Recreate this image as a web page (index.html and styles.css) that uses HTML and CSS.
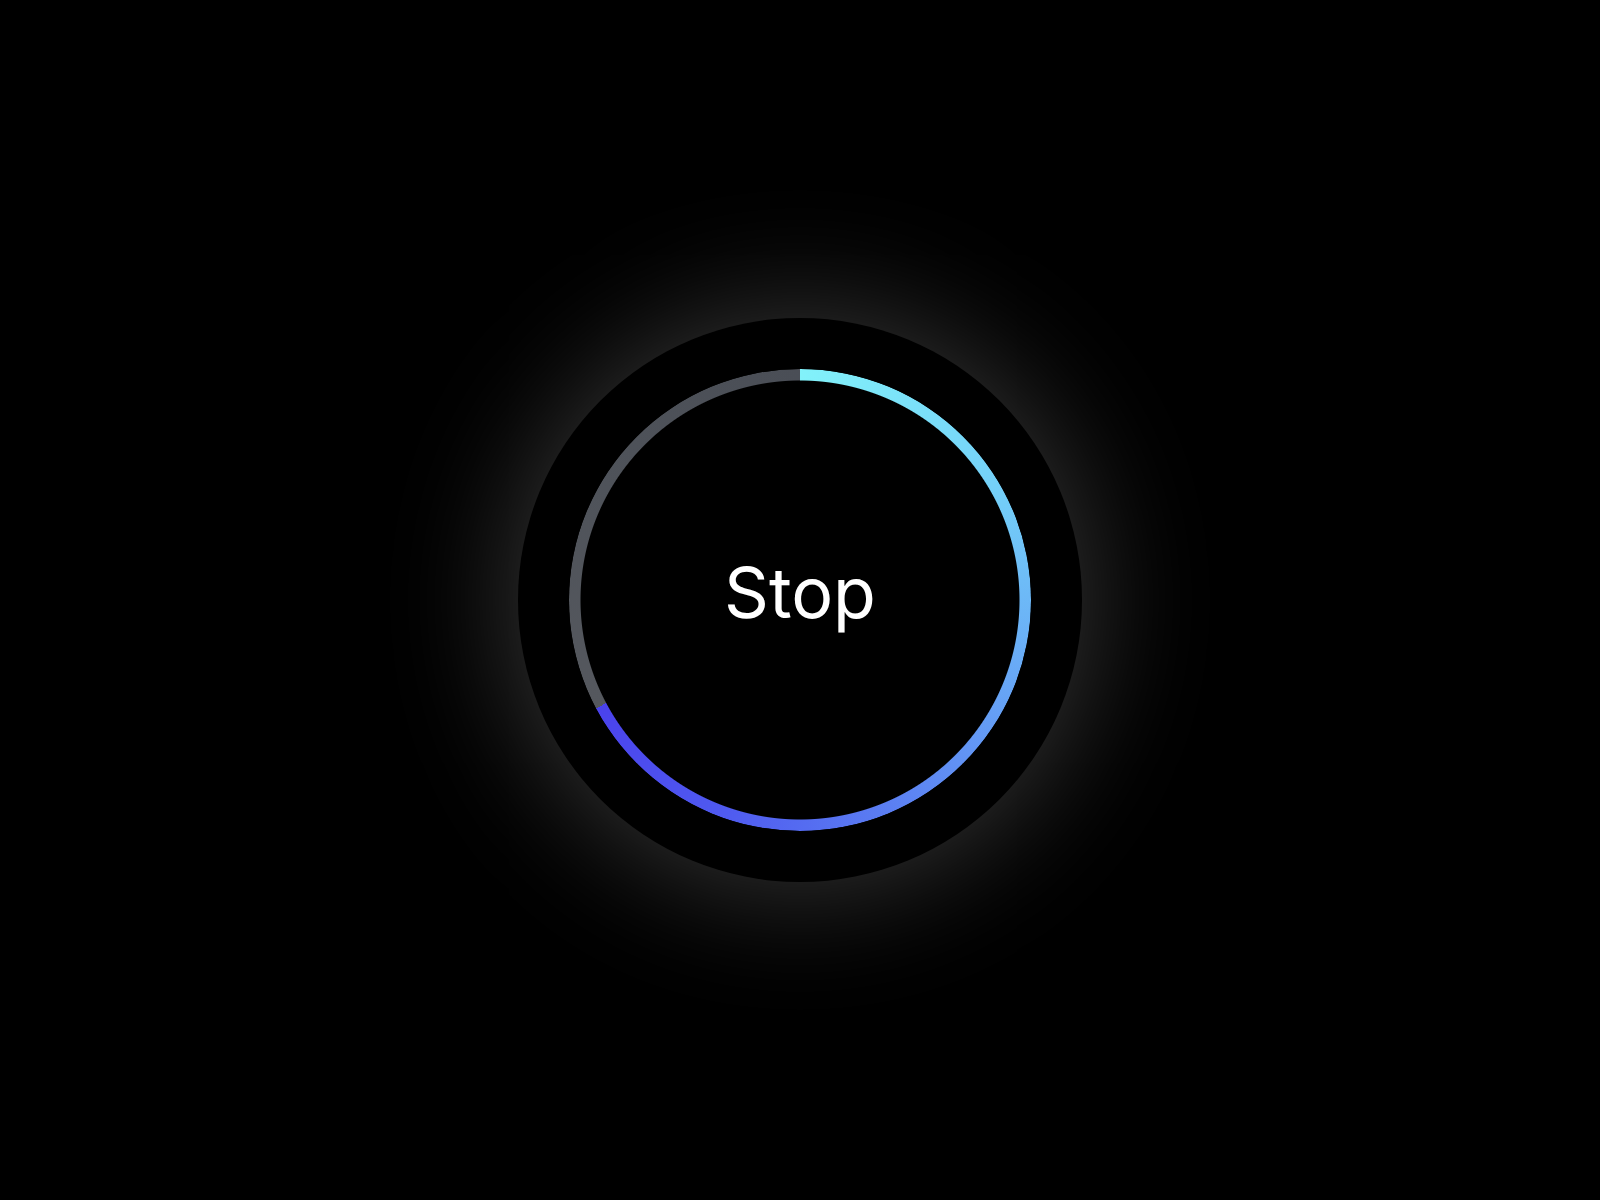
FILE: index.html
```html
<!DOCTYPE html>
<html lang="en">
<head>
<meta charset="utf-8">
<title>Stop</title>
<link rel="stylesheet" href="styles.css">
</head>
<body>
<main class="stage">
  <button class="timer" type="button">
    <span class="ring"></span>
    <span class="label">Stop</span>
  </button>
</main>
</body>
</html>
```

FILE: styles.css
```css
html, body {
  margin: 0;
  padding: 0;
  background: #000;
  height: 100%;
}
.stage {
  height: 1200px;
  display: flex;
  align-items: center;
  justify-content: center;
}
.timer {
  width: 564px;
  height: 564px;
  border: 0;
  padding: 0;
  border-radius: 50%;
  background: #000;
  box-shadow: 0 0 125px 8px rgba(255, 255, 255, 0.21);
  display: grid;
  place-items: center;
  cursor: pointer;
  font-family: "Inter", "Liberation Sans", sans-serif;
}
.ring {
  grid-area: 1 / 1;
  width: 462px;
  height: 462px;
  border-radius: 50%;
  background: conic-gradient(from 0deg,
    #82f2fa 0deg,
    #74d0f8 60deg,
    #68a8f6 110deg,
    #5a7cf2 160deg,
    #4f5af0 200deg,
    #4a42ec 242deg,
    #55585e 242deg,
    #4f535a 300deg,
    #4a4e56 360deg);
  -webkit-mask: radial-gradient(closest-side, transparent calc(100% - 12px), #000 calc(100% - 11px));
  mask: radial-gradient(closest-side, transparent calc(100% - 12px), #000 calc(100% - 11px));
}
.label {
  grid-area: 1 / 1;
  color: #fff;
  font-family: "Inter", "Liberation Sans", sans-serif;
  font-size: 70px;
  font-weight: 400;
  letter-spacing: 0;
  line-height: 1;
  margin-top: -14px;
}
```
